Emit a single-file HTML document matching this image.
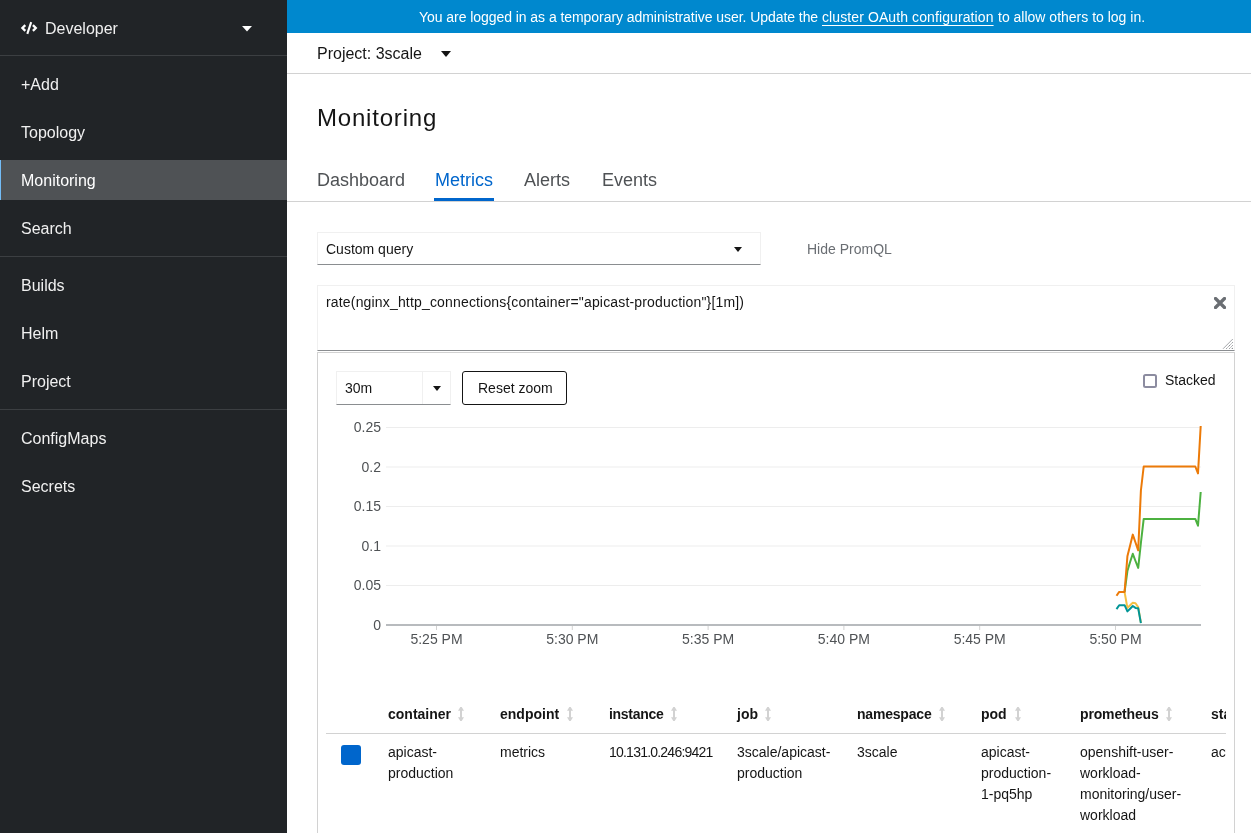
<!DOCTYPE html>
<html><head><meta charset="utf-8">
<style>
*{box-sizing:border-box;margin:0;padding:0}
html,body{width:1251px;height:833px;overflow:hidden;background:#fff;font-family:"Liberation Sans",sans-serif;color:#151515}
.a{position:absolute;white-space:nowrap}
#side{position:absolute;left:0;top:0;width:287px;height:833px;background:#212427}
.sep{position:absolute;left:0;width:287px;height:1px;background:#3c3f42}
.nav{position:absolute;left:21px;font-size:16px;line-height:16px;color:#f0f0f0}
#active{position:absolute;left:0;top:160px;width:287px;height:40px;background:#4f5255}
#active i{position:absolute;left:0;top:0;width:1px;height:40px;background:#73bcf7}
#banner{position:absolute;left:287px;top:0;width:964px;height:33px;background:#0088ce}
.line{position:absolute;height:1px;background:#d2d2d2}
.th{position:absolute;top:47px;font-size:14px;line-height:14px;font-weight:700;color:#151515;white-space:nowrap}
.td{position:absolute;top:82px;font-size:14px;line-height:21px;color:#151515;white-space:nowrap}
.sort{position:absolute;top:47px;width:7px;height:14px}
.sort:before{content:"";position:absolute;left:2px;top:2px;width:3px;height:10px;background:#d2d2d2}
.sort:after{content:"";position:absolute;left:0;top:0;width:0;height:0;border-left:3.5px solid transparent;border-right:3.5px solid transparent;border-bottom:4px solid #d2d2d2}
</style></head><body><div style="position:absolute;left:0;top:0;width:1251px;height:833px;will-change:transform">
<div id="side">
  <svg class="a" style="left:18px;top:18px" width="24" height="20" viewBox="0 0 24 20">
    <path d="M7.3 7.1 L4.4 10 L7.3 12.9" fill="none" stroke="#fff" stroke-width="2.3" stroke-linejoin="miter"/>
    <path d="M14.9 7.1 L17.8 10 L14.9 12.9" fill="none" stroke="#fff" stroke-width="2.3" stroke-linejoin="miter"/>
    <path d="M13.2 4.2 L9.3 15.8" fill="none" stroke="#fff" stroke-width="2.1"/>
  </svg>
  <div class="nav" style="left:45px;top:21px;color:#f0f0f0">Developer</div>
  <svg class="a" style="left:242px;top:26px" width="10" height="6" viewBox="0 0 10 6"><path d="M0 0H10L5 5.4Z" fill="#fff"/></svg>
  <div class="sep" style="top:55px"></div>
  <div id="active"><i></i></div>
  <div class="nav" style="top:77px">+Add</div>
  <div class="nav" style="top:125px">Topology</div>
  <div class="nav" style="top:173px;color:#fff">Monitoring</div>
  <div class="nav" style="top:221px">Search</div>
  <div class="sep" style="top:256px"></div>
  <div class="nav" style="top:278px">Builds</div>
  <div class="nav" style="top:326px">Helm</div>
  <div class="nav" style="top:374px">Project</div>
  <div class="sep" style="top:409px"></div>
  <div class="nav" style="top:431px">ConfigMaps</div>
  <div class="nav" style="top:479px">Secrets</div>
</div>

<div id="banner">
  <div class="a" style="left:132px;top:10px;font-size:14px;line-height:14px;color:#fff;letter-spacing:-0.055px">You are logged in as a temporary administrative user. Update the</div>
  <div class="a" style="left:535px;top:10px;font-size:14px;line-height:14px;color:#fff;text-decoration:underline;text-underline-offset:3px;letter-spacing:0.1px">cluster OAuth configuration</div>
  <div class="a" style="left:711px;top:10px;font-size:14px;line-height:14px;color:#fff">to allow others to log in.</div>
</div>

<!-- project bar -->
<div class="a" style="left:317px;top:46px;font-size:16px;line-height:16px;color:#151515">Project: 3scale</div>
<svg class="a" style="left:441px;top:51px" width="10" height="6" viewBox="0 0 10 6"><path d="M0 0H10L5 6Z" fill="#151515"/></svg>
<div class="line" style="left:287px;top:73px;width:964px"></div>

<!-- title -->
<div class="a" style="left:317px;top:106px;font-size:24px;line-height:24px;color:#151515;letter-spacing:0.8px">Monitoring</div>

<!-- tabs -->
<div class="a" style="left:317px;top:171px;font-size:18px;line-height:18px;color:#4f5255">Dashboard</div>
<div class="a" style="left:435px;top:171px;font-size:18px;line-height:18px;color:#0066cc">Metrics</div>
<div class="a" style="left:524px;top:171px;font-size:18px;line-height:18px;color:#4f5255">Alerts</div>
<div class="a" style="left:602px;top:171px;font-size:18px;line-height:18px;color:#4f5255">Events</div>
<div class="a" style="left:434px;top:198px;width:60px;height:3px;background:#0066cc"></div>
<div class="line" style="left:287px;top:201px;width:964px"></div>


<!-- query controls -->
<div class="a" style="left:317px;top:232px;width:444px;height:33px;border:1px solid #f0f0f0;border-bottom-color:#8a8d90"></div>
<div class="a" style="left:326px;top:242px;font-size:14px;line-height:14px;color:#151515">Custom query</div>
<svg class="a" style="left:734px;top:247px" width="8" height="5" viewBox="0 0 8 5"><path d="M0 0H8L4 5Z" fill="#151515"/></svg>
<div class="a" style="left:807px;top:242px;font-size:14px;line-height:14px;color:#6a6e73">Hide PromQL</div>

<div class="a" style="left:317px;top:285px;width:918px;height:66px;border:1px solid #f0f0f0;border-bottom-color:#8a8d90"></div>
<svg class="a" style="left:1220px;top:336px" width="15" height="15" viewBox="0 0 15 15">
<path d="M3 12.8L12.8 3" stroke="#9a9da0" stroke-width="0.9"/>
<path d="M6.2 12.8L12.8 6.2" stroke="#8a8d90" stroke-width="1" stroke-dasharray="1.4 0.6"/>
<path d="M9.2 12.8L12.8 9.2" stroke="#8a8d90" stroke-width="1" stroke-dasharray="1.4 0.6"/>
<circle cx="12.3" cy="12.4" r="0.6" fill="#7a7d80"/>
</svg>
<div class="a" style="left:326px;top:295px;font-size:14px;line-height:14px;color:#151515;letter-spacing:0.17px">rate(nginx_http_connections{container="apicast-production"}[1m])</div>
<svg class="a" style="left:1214px;top:297px" width="12" height="12" viewBox="0 0 12 12"><path d="M1.5 1.5L10.5 10.5M10.5 1.5L1.5 10.5" stroke="#6a6e73" stroke-width="3.3" stroke-linecap="round"/></svg>

<!-- panel -->
<div class="a" style="left:317px;top:352px;width:918px;height:500px;border:1px solid #d2d2d2"></div>
<div class="a" style="left:336px;top:371px;width:115px;height:34px;border:1px solid #f0f0f0;border-bottom-color:#8a8d90"></div>
<div class="a" style="left:422px;top:372px;width:1px;height:32px;background:#f0f0f0"></div>
<div class="a" style="left:345px;top:381px;font-size:14px;line-height:14px;color:#151515">30m</div>
<svg class="a" style="left:433px;top:386px" width="8" height="5" viewBox="0 0 8 5"><path d="M0 0H8L4 5Z" fill="#151515"/></svg>
<div class="a" style="left:462px;top:371px;width:105px;height:34px;border:1px solid #151515;border-radius:3px"></div>
<div class="a" style="left:478px;top:381px;font-size:14px;line-height:14px;color:#151515">Reset zoom</div>
<div class="a" style="left:1143px;top:374px;width:14px;height:14px;border:2px solid #8c8ca0;border-radius:2.5px"></div>
<div class="a" style="left:1165px;top:373px;font-size:14px;line-height:14px;color:#151515">Stacked</div>

<!-- chart -->
<svg class="a" style="left:0;top:0" width="1251" height="833" viewBox="0 0 1251 833">
<g stroke="#ededed" stroke-width="1">
<line x1="386" x2="1201" y1="427.5" y2="427.5"/>
<line x1="386" x2="1201" y1="467" y2="467"/>
<line x1="386" x2="1201" y1="506.5" y2="506.5"/>
<line x1="386" x2="1201" y1="546" y2="546"/>
<line x1="386" x2="1201" y1="585.5" y2="585.5"/>
</g>
<line x1="386" x2="1201" y1="625" y2="625" stroke="#b8bbbe" stroke-width="2"/>
<g stroke="#d2d2d2" stroke-width="1">
<line x1="436.5" x2="436.5" y1="626" y2="630"/>
<line x1="572.3" x2="572.3" y1="626" y2="630"/>
<line x1="708.1" x2="708.1" y1="626" y2="630"/>
<line x1="843.9" x2="843.9" y1="626" y2="630"/>
<line x1="979.7" x2="979.7" y1="626" y2="630"/>
<line x1="1115.5" x2="1115.5" y1="626" y2="630"/>
</g>
<g style="font-family:'Liberation Sans',sans-serif" font-size="14" fill="#4f5255" text-anchor="end">
<text x="381" y="432">0.25</text>
<text x="381" y="472">0.2</text>
<text x="381" y="511">0.15</text>
<text x="381" y="551">0.1</text>
<text x="381" y="590">0.05</text>
<text x="381" y="630">0</text>
</g>
<g style="font-family:'Liberation Sans',sans-serif" font-size="14" fill="#4f5255" text-anchor="middle">
<text x="436.5" y="644">5:25 PM</text>
<text x="572.3" y="644">5:30 PM</text>
<text x="708.1" y="644">5:35 PM</text>
<text x="843.9" y="644">5:40 PM</text>
<text x="979.7" y="644">5:45 PM</text>
<text x="1115.5" y="644">5:50 PM</text>
</g>
<g fill="none" stroke-width="2" stroke-linejoin="round">
<polyline stroke="#4cb140" points="1124.6,591.9 1127.4,571.0 1130.1,562.0 1132.8,553.8 1135.5,561.0 1138.2,567.9 1140.9,543.0 1143.7,518.9 1195.3,518.9 1198.0,525.7 1200.7,492.0"/>
<polyline stroke="#f4c145" points="1124.6,592.3 1127.4,607.9 1130.1,605.3 1132.8,602.8 1135.5,603.2 1138.2,607.1 1140.9,622.7"/>
<polyline stroke="#ec7a08" points="1116.5,595.8 1119.2,591.9 1121.9,591.9 1124.6,591.9 1127.4,556.3 1130.1,545.4 1132.8,534.6 1135.5,542.5 1138.2,550.4 1140.9,490.5 1143.7,466.5 1195.3,466.5 1198.0,473.4 1200.7,426.0"/>
<polyline stroke="#009596" points="1116.5,609.1 1119.2,605.2 1121.9,605.2 1124.6,605.2 1127.4,611.4 1130.1,608.7 1132.8,606.0 1135.5,607.9 1138.2,608.3 1140.9,623.1"/>
</g>
</svg>

<!-- table -->
<div class="a" style="left:326px;top:660px;width:900px;height:173px;overflow:hidden">
  <div class="a" style="left:0;top:73px;width:900px;height:1px;background:#d2d2d2"></div>
  <div class="th" style="left:62px">container</div><svg class="a" style="left:132px;top:47px" width="6" height="14" viewBox="0 0 6 14"><path d="M2.3 0H3.7L6 3.8H0ZM2 3.5H4V10.5H2ZM0 10.2H6L3.7 14H2.3Z" fill="#d2d2d2"/></svg>
  <div class="th" style="left:174px">endpoint</div><svg class="a" style="left:241px;top:47px" width="6" height="14" viewBox="0 0 6 14"><path d="M2.3 0H3.7L6 3.8H0ZM2 3.5H4V10.5H2ZM0 10.2H6L3.7 14H2.3Z" fill="#d2d2d2"/></svg>
  <div class="th" style="left:283px;letter-spacing:-0.3px">instance</div><svg class="a" style="left:345px;top:47px" width="6" height="14" viewBox="0 0 6 14"><path d="M2.3 0H3.7L6 3.8H0ZM2 3.5H4V10.5H2ZM0 10.2H6L3.7 14H2.3Z" fill="#d2d2d2"/></svg>
  <div class="th" style="left:411px">job</div><svg class="a" style="left:439px;top:47px" width="6" height="14" viewBox="0 0 6 14"><path d="M2.3 0H3.7L6 3.8H0ZM2 3.5H4V10.5H2ZM0 10.2H6L3.7 14H2.3Z" fill="#d2d2d2"/></svg>
  <div class="th" style="left:531px;letter-spacing:-0.2px">namespace</div><svg class="a" style="left:613px;top:47px" width="6" height="14" viewBox="0 0 6 14"><path d="M2.3 0H3.7L6 3.8H0ZM2 3.5H4V10.5H2ZM0 10.2H6L3.7 14H2.3Z" fill="#d2d2d2"/></svg>
  <div class="th" style="left:655px">pod</div><svg class="a" style="left:689px;top:47px" width="6" height="14" viewBox="0 0 6 14"><path d="M2.3 0H3.7L6 3.8H0ZM2 3.5H4V10.5H2ZM0 10.2H6L3.7 14H2.3Z" fill="#d2d2d2"/></svg>
  <div class="th" style="left:754px;letter-spacing:-0.15px">prometheus</div><svg class="a" style="left:840px;top:47px" width="6" height="14" viewBox="0 0 6 14"><path d="M2.3 0H3.7L6 3.8H0ZM2 3.5H4V10.5H2ZM0 10.2H6L3.7 14H2.3Z" fill="#d2d2d2"/></svg>
  <div class="th" style="left:885px">status</div>
  <div class="a" style="left:15px;top:85px;width:20px;height:20px;background:#0066cc;border-radius:3px"></div>
  <div class="td" style="left:62px">apicast-<br>production</div>
  <div class="td" style="left:174px">metrics</div>
  <div class="td" style="left:283px;letter-spacing:-0.78px">10.131.0.246:9421</div>
  <div class="td" style="left:411px">3scale/apicast-<br>production</div>
  <div class="td" style="left:531px">3scale</div>
  <div class="td" style="left:655px">apicast-<br>production-<br>1-pq5hp</div>
  <div class="td" style="left:754px">openshift-user-<br>workload-<br>monitoring/user-<br>workload</div>
  <div class="td" style="left:885px">active</div>
</div>
</div></body></html>
